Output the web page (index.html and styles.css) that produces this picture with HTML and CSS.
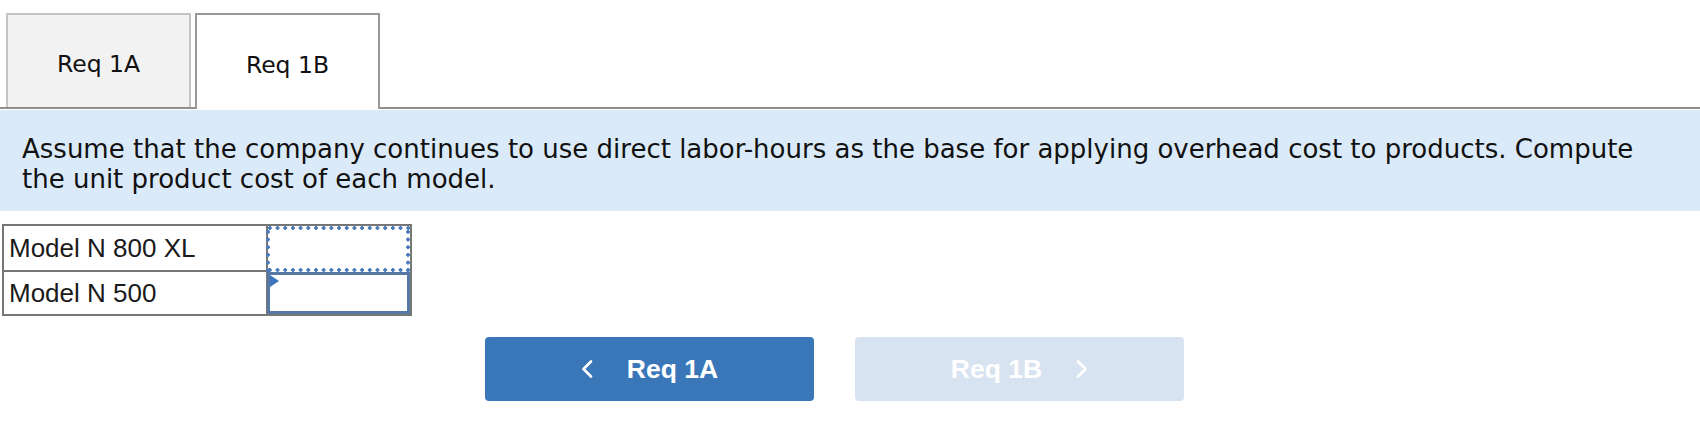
FILE: index.html
```html
<!DOCTYPE html>
<html>
<head>
<meta charset="utf-8">
<link rel="stylesheet" href="styles.css">
</head>
<body>
<div class="tabs">
  <div class="tab tab-inactive">Req 1A</div>
  <div class="tab tab-active">Req 1B</div>
</div>
<div class="panel">
  <p>Assume that the company continues to use direct labor-hours as the base for applying overhead cost to products. Compute the unit product cost of each model.</p>
</div>
<div class="grid">
  <div class="label first">Model N 800 XL</div>
  <div class="cell dotted"></div>
  <div class="label">Model N 500</div>
  <div class="cell solid"><span class="flag"></span></div>
</div>
<div class="nav">
  <button class="btn btn-prev">
    <svg class="chev" width="12" height="18" viewBox="0 0 12 18"><polyline points="10,1.5 2.5,9 10,16.5" fill="none" stroke="#ffffff" stroke-width="2.6" stroke-linecap="round" stroke-linejoin="round"/></svg>
    <span>Req 1A</span>
  </button>
  <button class="btn btn-next">
    <span>Req 1B</span>
    <svg class="chev" width="12" height="18" viewBox="0 0 12 18"><polyline points="2,1.5 9.5,9 2,16.5" fill="none" stroke="#ffffff" stroke-width="2.6" stroke-linecap="round" stroke-linejoin="round"/></svg>
  </button>
</div>
</body>
</html>
```

FILE: styles.css
```css
html, body {
  margin: 0;
  padding: 0;
  background: #ffffff;
}
body {
  width: 1700px;
  font-family: "DejaVu Sans", Verdana, sans-serif;
  color: #000;
}
.tabs {
  display: flex;
  gap: 4px;
  padding: 13px 0 0 6px;
  border-bottom: 2px solid #8f8f8f;
  height: 94px;
}
.tab {
  box-sizing: border-box;
  width: 185px;
  height: 94px;
  display: flex;
  align-items: center;
  justify-content: center;
  font-size: 23.5px;
  padding-top: 5px;
  color: #111;
}
.tab-inactive {
  background: #f2f2f2;
  border: 2px solid #c4c4c4;
  border-bottom: none;
}
.tab-active {
  background: #ffffff;
  border: 2px solid #999999;
  border-bottom: none;
  height: 96px;
  margin-bottom: -2px;
}
.panel {
  background: #dbeaf8;
  height: 101px;
  box-sizing: border-box;
  padding: 24px 22px 0 22px;
  margin-top: 1px;
}
.panel p {
  margin: 0;
  font-size: 26px;
  line-height: 30px;
  color: #111;
}
.grid {
  display: grid;
  grid-template-columns: 264px 142px;
  grid-template-rows: 46px 42px;
  margin: 13px 0 0 2px;
  width: 406px;
  border: 2px solid #767676;
  font-family: "Liberation Sans", Arial, sans-serif;
}
.label {
  box-sizing: border-box;
  border-right: 2px solid #767676;
  display: flex;
  align-items: center;
  padding-left: 5px;
  padding-top: 1px;
  font-size: 26px;
  color: #1a1a1a;
}
.label.first {
  border-bottom: 2px solid #767676;
}
.cell {
  box-sizing: border-box;
  position: relative;
}
.dotted {
  margin-left: -2px;
  background:
    radial-gradient(circle, #4a7bbb 1.6px, transparent 2.1px) 0 0 / 7.7px 4px repeat-x,
    radial-gradient(circle, #4a7bbb 1.6px, transparent 2.1px) 0 100% / 7.7px 4px repeat-x,
    radial-gradient(circle, #4a7bbb 1.6px, transparent 2.1px) 0 2px / 4px 7.7px repeat-y,
    radial-gradient(circle, #4a7bbb 1.6px, transparent 2.1px) 100% 2px / 4px 7.7px repeat-y;
}
.solid {
  border: 3px solid #5878a4;
  margin-left: -1px;
}
.flag {
  position: absolute;
  left: 0;
  top: 0;
  width: 0;
  height: 0;
  border-top: 6px solid transparent;
  border-bottom: 6px solid transparent;
  border-left: 9px solid #3a76bd;
}
.nav {
  display: flex;
  gap: 41px;
  margin: 21px 0 0 485px;
}
.btn {
  width: 329px;
  height: 64px;
  border: none;
  border-radius: 4px;
  font-family: "Liberation Sans", Arial, sans-serif;
  font-weight: bold;
  font-size: 26.5px;
  color: #ffffff;
  display: flex;
  align-items: center;
  justify-content: center;
  gap: 34px;
  padding: 0;
}
.btn-prev {
  background: #3a77b8;
}
.btn-next {
  background: #d8e3f1;
}
.chev {
  display: block;
}
```
